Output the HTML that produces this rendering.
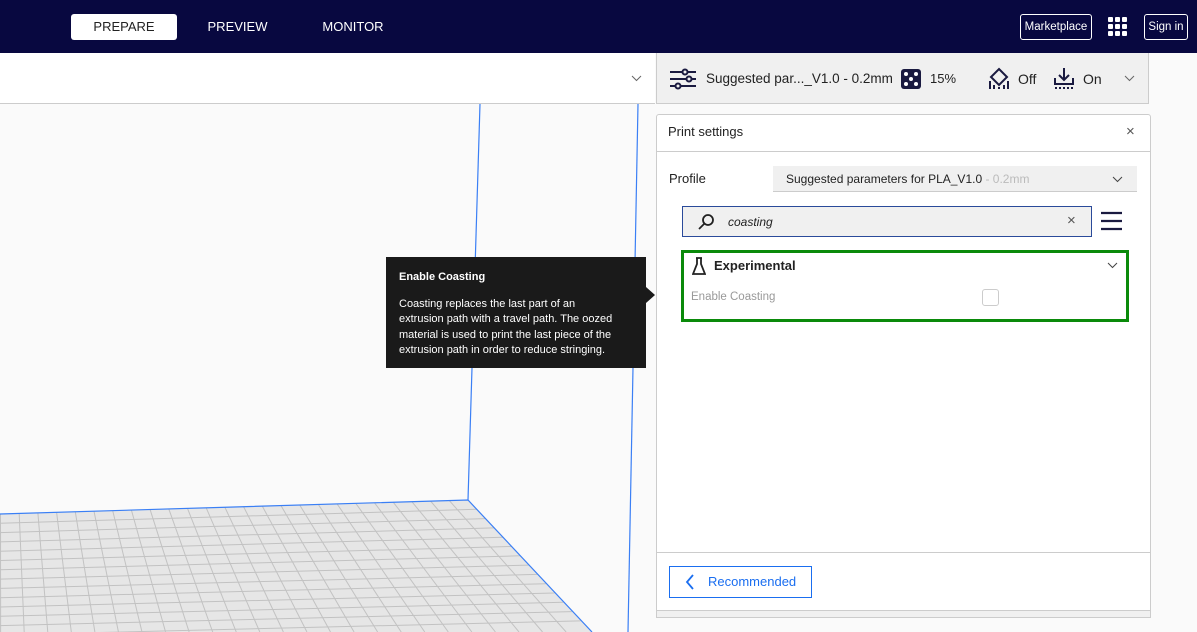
<!DOCTYPE html>
<html><head><meta charset="utf-8"><style>
*{margin:0;padding:0;box-sizing:border-box}
body{width:1197px;height:632px;overflow:hidden;background:#fafafa;font-family:"Liberation Sans","Noto Sans CJK SC",sans-serif;position:relative;color:#222}
.abs{position:absolute;white-space:nowrap}
#top{left:0;top:0;width:1197px;height:53px;background:#080840}
.tab{position:absolute;top:14px;height:26px;font-size:13px;line-height:26px;color:#fff;text-align:center}
.btn{position:absolute;top:14px;height:26px;border:1px solid #fff;border-radius:3px;color:#fff;font-size:11.5px;line-height:24px;padding:0 3px;white-space:nowrap;text-align:center}
</style></head><body>
<svg class="abs" style="left:0;top:0" width="1197" height="632">
<polygon points="0,514 468,500 592,632 0,632" fill="#e6e6e6"/>
<g id="grid" stroke="#c2c2c2" stroke-width="1"></g>
<polyline points="0,514 468,500 592,632" fill="none" stroke="#3a7ff5" stroke-width="1.2"/>
<line x1="480" y1="104" x2="468" y2="500" stroke="#3a7ff5" stroke-width="1.2"/>
<line x1="638" y1="104" x2="628" y2="632" stroke="#3a7ff5" stroke-width="1.2"/>
</svg>
<script>
var g=document.getElementById('grid'),s='';
for(var i=1;i<26;i++){var xt=468-18.7*i,yt=500+0.03*18.7*i,xb=xt+0.26*xt;s+='<line x1="'+xt+'" y1="'+yt+'" x2="'+xb+'" y2="632"/>';}
for(var j=1;j<14;j++){var d=j*9.3;var yl=514+d,yr=500+d;var xr=468+d*0.93;s+='<line x1="0" y1="'+yl+'" x2="'+xr+'" y2="'+yr+'"/>';}
g.innerHTML=s;
</script>
<div id="top" class="abs">
<div class="tab" style="left:71px;width:106px;background:#fff;color:#222;border-radius:3px">PREPARE</div>
<div class="tab" style="left:200px;width:75px">PREVIEW</div>
<div class="tab" style="left:313px;width:80px">MONITOR</div>
<div class="btn" style="left:1020px;width:72px">Marketplace</div>
<svg class="abs" style="left:1108px;top:17px" width="20" height="20" fill="#fff"><rect x="0" y="0" width="5" height="5" rx="1"/><rect x="7" y="0" width="5" height="5" rx="1"/><rect x="14" y="0" width="5" height="5" rx="1"/><rect x="0" y="7" width="5" height="5" rx="1"/><rect x="7" y="7" width="5" height="5" rx="1"/><rect x="14" y="7" width="5" height="5" rx="1"/><rect x="0" y="14" width="5" height="5" rx="1"/><rect x="7" y="14" width="5" height="5" rx="1"/><rect x="14" y="14" width="5" height="5" rx="1"/></svg>
<div class="btn" style="left:1144px;width:44px">Sign in</div>
</div>
<div class="abs" style="left:0;top:53px;width:655px;height:51px;background:#fff;border-bottom:1px solid #ccc"></div>
<svg class="abs" style="left:631px;top:75px" width="11" height="7"><path d="M1 1l4.5 4.5L10 1" fill="none" stroke="#666"/></svg>
<div class="abs" style="left:656px;top:53px;width:493px;height:51px;background:#f0f0f0;border:1px solid #ccc;border-top:none"></div>
<svg class="abs" style="left:670px;top:68px" width="28" height="22" stroke="#1a1a40" stroke-width="2" fill="none"><path d="M0 4h26M0 11h26M0 18h26"/><circle cx="15" cy="4" r="2.5" fill="#f0f0f0"/><circle cx="19" cy="11" r="2.5" fill="#f0f0f0"/><circle cx="8" cy="18" r="2.5" fill="#f0f0f0"/></svg>
<div class="abs" style="left:706px;top:71px;font-size:13.5px;color:#222">Suggested par..._V1.0 - 0.2mm</div>
<svg class="abs" style="left:901px;top:69px" width="20" height="20"><rect x="0" y="0" width="20" height="20" rx="3" fill="#1a1a40"/><g fill="#fff"><circle cx="5" cy="5" r="2"/><circle cx="15" cy="5" r="2"/><circle cx="10" cy="10" r="2"/><circle cx="5" cy="15" r="2"/><circle cx="15" cy="15" r="2"/></g></svg>
<div class="abs" style="left:930px;top:71px;font-size:13px">15%</div>
<svg class="abs" style="left:988px;top:67px" width="22" height="24" fill="none" stroke="#1a1a40" stroke-width="2"><path d="M11 2l8 8-8 8-8-8z"/><path d="M2 14v8M6 18v4M11 20v2M16 18v4M20 14v8"/></svg>
<div class="abs" style="left:1018px;top:71px;font-size:14px">Off</div>
<svg class="abs" style="left:1053px;top:67px" width="22" height="24" fill="none" stroke="#1a1a40" stroke-width="2"><path d="M11 1v12M6 8l5 5 5-5M2 11v6h18v-6"/><path d="M2 21h18" stroke-dasharray="2 2"/></svg>
<div class="abs" style="left:1083px;top:71px;font-size:14px">On</div>
<svg class="abs" style="left:1124px;top:75px" width="11" height="7"><path d="M1 1l4.5 4.5L10 1" fill="none" stroke="#666"/></svg>
<div class="abs" style="left:656px;top:114px;width:495px;height:504px;background:#fff;border:1px solid #ccc;border-radius:3px"></div>
<div class="abs" style="left:656px;top:151px;width:495px;height:1px;background:#ccc"></div>
<div class="abs" style="left:668px;top:124px;font-size:13px">Print settings</div>
<div class="abs" style="left:1126px;top:123px;font-size:15px;color:#555">×</div>
<div class="abs" style="left:669px;top:171px;font-size:13px">Profile</div>
<div class="abs" style="left:773px;top:166px;width:364px;height:26px;background:#f0f0f0;border-bottom:1px solid #ccc;font-size:12px;line-height:26px;padding-left:13px">Suggested parameters for PLA_V1.0<span style="color:#bbb"> - 0.2mm</span></div>
<svg class="abs" style="left:1112px;top:176px" width="11" height="7"><path d="M1 1l4.5 4.5L10 1" fill="none" stroke="#444"/></svg>
<div class="abs" style="left:682px;top:206px;width:410px;height:31px;background:#f0f0f0;border:1px solid #2a4a9a"></div>
<svg class="abs" style="left:697px;top:213px" width="18" height="18" fill="none" stroke="#222" stroke-width="1.8"><circle cx="11" cy="7" r="5"/><path d="M7 11l-5 5"/></svg>
<div class="abs" style="left:728px;top:215px;font-size:12px;font-style:italic">coasting</div>
<div class="abs" style="left:1067px;top:212px;font-size:15px;color:#555">×</div>
<svg class="abs" style="left:1101px;top:211px" width="22" height="20" stroke="#1a1a40" stroke-width="2.2"><path d="M0 2h21M0 10h21M0 18h21"/></svg>
<div class="abs" style="left:681px;top:250px;width:448px;height:72px;border:3px solid #0a8a0a"></div>
<svg class="abs" style="left:692px;top:257px" width="14" height="18" fill="none" stroke="#222" stroke-width="1.8"><path d="M4 1h6M5 1v6l-4 10h12L9 7V1"/></svg>
<div class="abs" style="left:714px;top:258px;font-size:13px;font-weight:bold">Experimental</div>
<svg class="abs" style="left:1107px;top:262px" width="11" height="7"><path d="M1 1l4.5 4.5L10 1" fill="none" stroke="#444"/></svg>
<div class="abs" style="left:691px;top:291px;font-size:11.5px;color:#999">Enable Coasting</div>
<div class="abs" style="left:982px;top:289px;width:17px;height:17px;border:1px solid #ccc;border-radius:3px"></div>
<div class="abs" style="left:656px;top:552px;width:495px;height:1px;background:#ccc"></div>
<div class="abs" style="left:669px;top:566px;width:143px;height:32px;border:1px solid #1a6ef0;color:#1a6ef0;font-size:13px;line-height:30px;padding-left:38px">Recommended</div>
<svg class="abs" style="left:685px;top:574px" width="10" height="16"><path d="M8 1L2 8l6 7" fill="none" stroke="#1a6ef0" stroke-width="1.8"/></svg>
<div class="abs" style="left:656px;top:610px;width:495px;height:8px;background:#f0f0f0;border:1px solid #ccc"></div>
<div class="abs" style="left:386px;top:257px;width:260px;height:111px;background:#1a1a1a;color:#fff;font-size:11px;padding:13px 13px;line-height:15.5px;white-space:normal">
<div style="font-weight:bold;margin-bottom:11px">Enable Coasting</div>
<div>Coasting replaces the last part of an<br>extrusion path with a travel path. The oozed<br>material is used to print the last piece of the<br>extrusion path in order to reduce stringing.</div>
</div>
<div class="abs" style="left:646px;top:287px;width:0;height:0;border-top:8px solid transparent;border-bottom:8px solid transparent;border-left:9px solid #1a1a1a"></div>
</body></html>
